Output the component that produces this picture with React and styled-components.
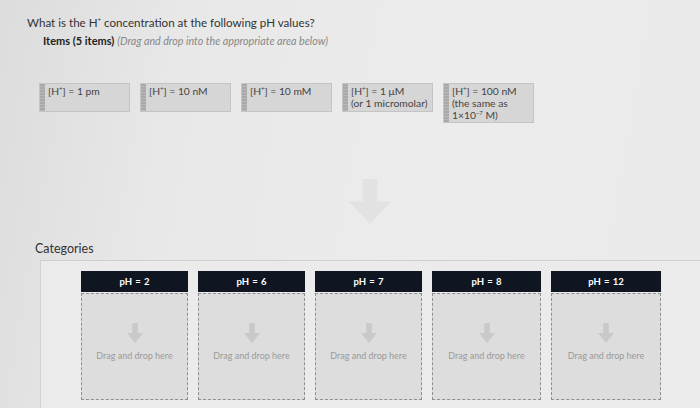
import React from 'react';
import styled, { createGlobalStyle } from 'styled-components';

const GlobalStyle = createGlobalStyle`
  html, body {
    margin: 0;
    padding: 0;
  }
  body {
    width: 700px;
    height: 408px;
    overflow: hidden;
    font-family: Lato, "Open Sans", sans-serif;
    background: linear-gradient(100deg, #dcdcdc 0%, #e8e8e8 25%, #ececec 60%, #eaeaea 100%);
    color: #333;
  }
`;

const Page = styled.div`
  height: 408px;
  box-sizing: border-box;
  padding: 12px 0 0 27px;
  display: flex;
  flex-direction: column;
  overflow: hidden;
`;

const Question = styled.div`
  font-size: 11.6px;
  line-height: 16px;
  color: #333;
  sup {
    font-size: 6px;
    vertical-align: 5px;
  }
`;

const ItemsLine = styled.div`
  margin: 2px 0 0 16px;
  font-size: 11px;
  line-height: 15px;
  color: #222;
  b {
    font-weight: 700;
  }
  i {
    color: #888;
    font-size: 10.7px;
  }
`;

const ItemsRow = styled.div`
  display: flex;
  align-items: flex-start;
  gap: 10px;
  margin: 35px 0 0 12px;
`;

const Card = styled.div`
  width: 91px;
  min-height: 29px;
  display: flex;
  background: #d6d6d6;
  border: 1px solid #c4c4c4;
  box-sizing: border-box;
`;

const Handle = styled.div`
  width: 5px;
  flex: none;
  background: repeating-linear-gradient(180deg, #a9a9a9 0 2px, #b8b8b8 2px 3px);
`;

const CardText = styled.div`
  padding: 1px 3px;
  font-size: 10.3px;
  line-height: 12px;
  color: #444;
  white-space: nowrap;
  sup {
    font-size: 6px;
    vertical-align: 4px;
    line-height: 0;
  }
`;

const BigArrow = styled.div`
  display: flex;
  justify-content: center;
  margin: 56px 0 0 0;
  padding-left: 318px;
  width: 50px;
`;

const CategoriesLabel = styled.div`
  margin: 17px 0 0 8px;
  font-size: 12.5px;
  color: #333;
`;

const Panel = styled.div`
  flex: 1;
  margin: 4px 0 0 13px;
  border-top: 1px solid #cfcfcf;
  border-left: 1px solid #d2d2d2;
  background: #ebebeb;
  padding: 10px 0 0 40px;
  display: flex;
  align-items: flex-start;
  gap: 10px;
`;

const Column = styled.div`
  width: ${(p) => p.w}px;
  display: flex;
  flex-direction: column;
`;

const Header = styled.div`
  height: 21px;
  background: #0f1621;
  color: #fff;
  font-size: 9.5px;
  font-weight: 700;
  display: flex;
  align-items: center;
  justify-content: center;
  word-spacing: 1px;
`;

const Drop = styled.div`
  height: 107px;
  margin-top: 1px;
  border: 1px dashed #8f8f8f;
  background: #dddddd;
  display: flex;
  flex-direction: column;
  align-items: center;
  padding-top: 29px;
  box-sizing: border-box;
`;

const DropText = styled.div`
  margin-top: 7px;
  font-size: 9px;
  color: #9a9a9a;
`;

const Arrow = ({ w = 20, h = 20, color = '#c9c9c9' }) => (
  <svg width={w} height={h} viewBox="0 0 20 20" preserveAspectRatio="none">
    <path d="M6.5 0 H13.5 V10 H20 L10 20 L0 10 H6.5 Z" fill={color} />
  </svg>
);

const items = [
  <>[H<sup>+</sup>] = 1 pm</>,
  <>[H<sup>+</sup>] = 10 nM</>,
  <>[H<sup>+</sup>] = 10 mM</>,
  <>[H<sup>+</sup>] = 1 μM<br />(or 1 micromolar)</>,
  <>[H<sup>+</sup>] = 100 nM<br />(the same as<br />1×10<sup>−7</sup> M)</>,
];

const categories = [
  { label: 'pH = 2', w: 107 },
  { label: 'pH = 6', w: 107 },
  { label: 'pH = 7', w: 107 },
  { label: 'pH = 8', w: 109 },
  { label: 'pH = 12', w: 110 },
];

export default function App() {
  return (
    <>
      <GlobalStyle />
      <Page>
        <Question>
          What is the H<sup>+</sup> concentration at the following pH values?
        </Question>
        <ItemsLine>
          <b>Items (5 items)</b> <i>(Drag and drop into the appropriate area below)</i>
        </ItemsLine>
        <ItemsRow>
          {items.map((item, i) => (
            <Card key={i}>
              <Handle />
              <CardText>{item}</CardText>
            </Card>
          ))}
        </ItemsRow>
        <BigArrow>
          <Arrow w={42} h={45} color="#e2e2e2" />
        </BigArrow>
        <CategoriesLabel>Categories</CategoriesLabel>
        <Panel>
          {categories.map((c) => (
            <Column key={c.label} w={c.w}>
              <Header>{c.label}</Header>
              <Drop>
                <Arrow w={16} h={20} />
                <DropText>Drag and drop here</DropText>
              </Drop>
            </Column>
          ))}
        </Panel>
      </Page>
    </>
  );
}
